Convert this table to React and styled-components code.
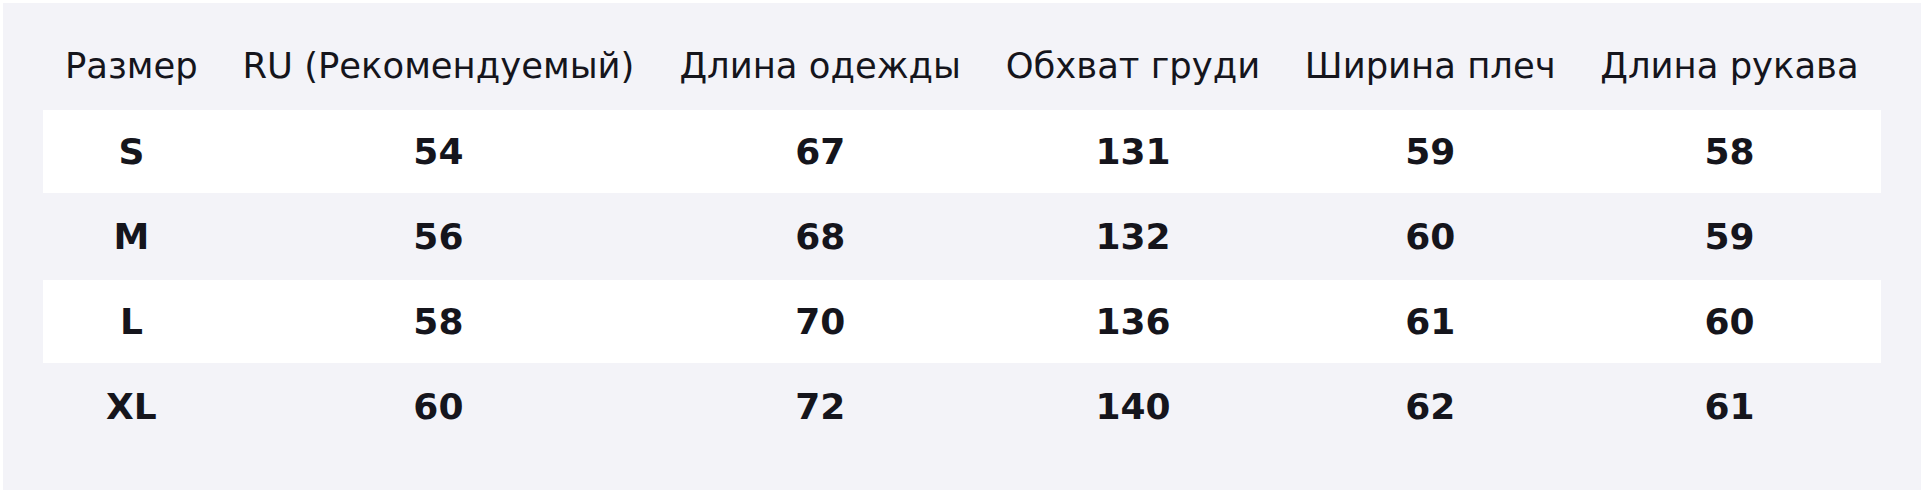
import React from "react";
import styled, { createGlobalStyle } from "styled-components";

const GlobalStyle = createGlobalStyle`
  html, body {
    margin: 0;
    padding: 0;
    background: #ffffff;
  }
  body {
    padding: 3px;
    font-family: "DejaVu Sans", "Liberation Sans", sans-serif;
    color: #15151c;
  }
`;

const columns = [
  "Размер",
  "RU (Рекомендуемый)",
  "Длина одежды",
  "Обхват груди",
  "Ширина плеч",
  "Длина рукава",
];

const rows = [
  ["S", "54", "67", "131", "59", "58"],
  ["M", "56", "68", "132", "60", "59"],
  ["L", "58", "70", "136", "61", "60"],
  ["XL", "60", "72", "140", "62", "61"],
];

const App = () => {
  return (
    <>
      <GlobalStyle />
      <Panel>
        <Table>
          <thead>
            <tr>
              {columns.map((c) => (
                <HeadCell key={c}>{c}</HeadCell>
              ))}
            </tr>
          </thead>
          <tbody>
            {rows.map((r, i) => (
              <Row key={r[0]} $striped={i % 2 === 0}>
                {r.map((v, j) => (
                  <Cell key={j}>{v}</Cell>
                ))}
              </Row>
            ))}
          </tbody>
        </Table>
      </Panel>
    </>
  );
};

const Panel = styled.div`
  background: #f3f3f8;
  padding: 40px;
  box-sizing: border-box;
  height: 487px;
`;

const Table = styled.table`
  width: 100%;
  border-collapse: collapse;
  border-spacing: 0;
`;

const HeadCell = styled.th`
  font-size: 35.4px;
  font-weight: 400;
  line-height: 42px;
  height: 67px;
  box-sizing: border-box;
  padding: 2px 21.5px 23px;
  text-align: center;
  white-space: nowrap;
  vertical-align: top;
`;

const Row = styled.tr`
  background: ${(p) => (p.$striped ? "#ffffff" : "transparent")};
  height: ${(p) => (p.$striped ? "83px" : "87px")};
`;

const Cell = styled.td`
  font-size: 36px;
  font-weight: 700;
  line-height: 42px;
  padding: 0 21.5px;
  text-align: center;
  vertical-align: middle;
`;

export default App;
